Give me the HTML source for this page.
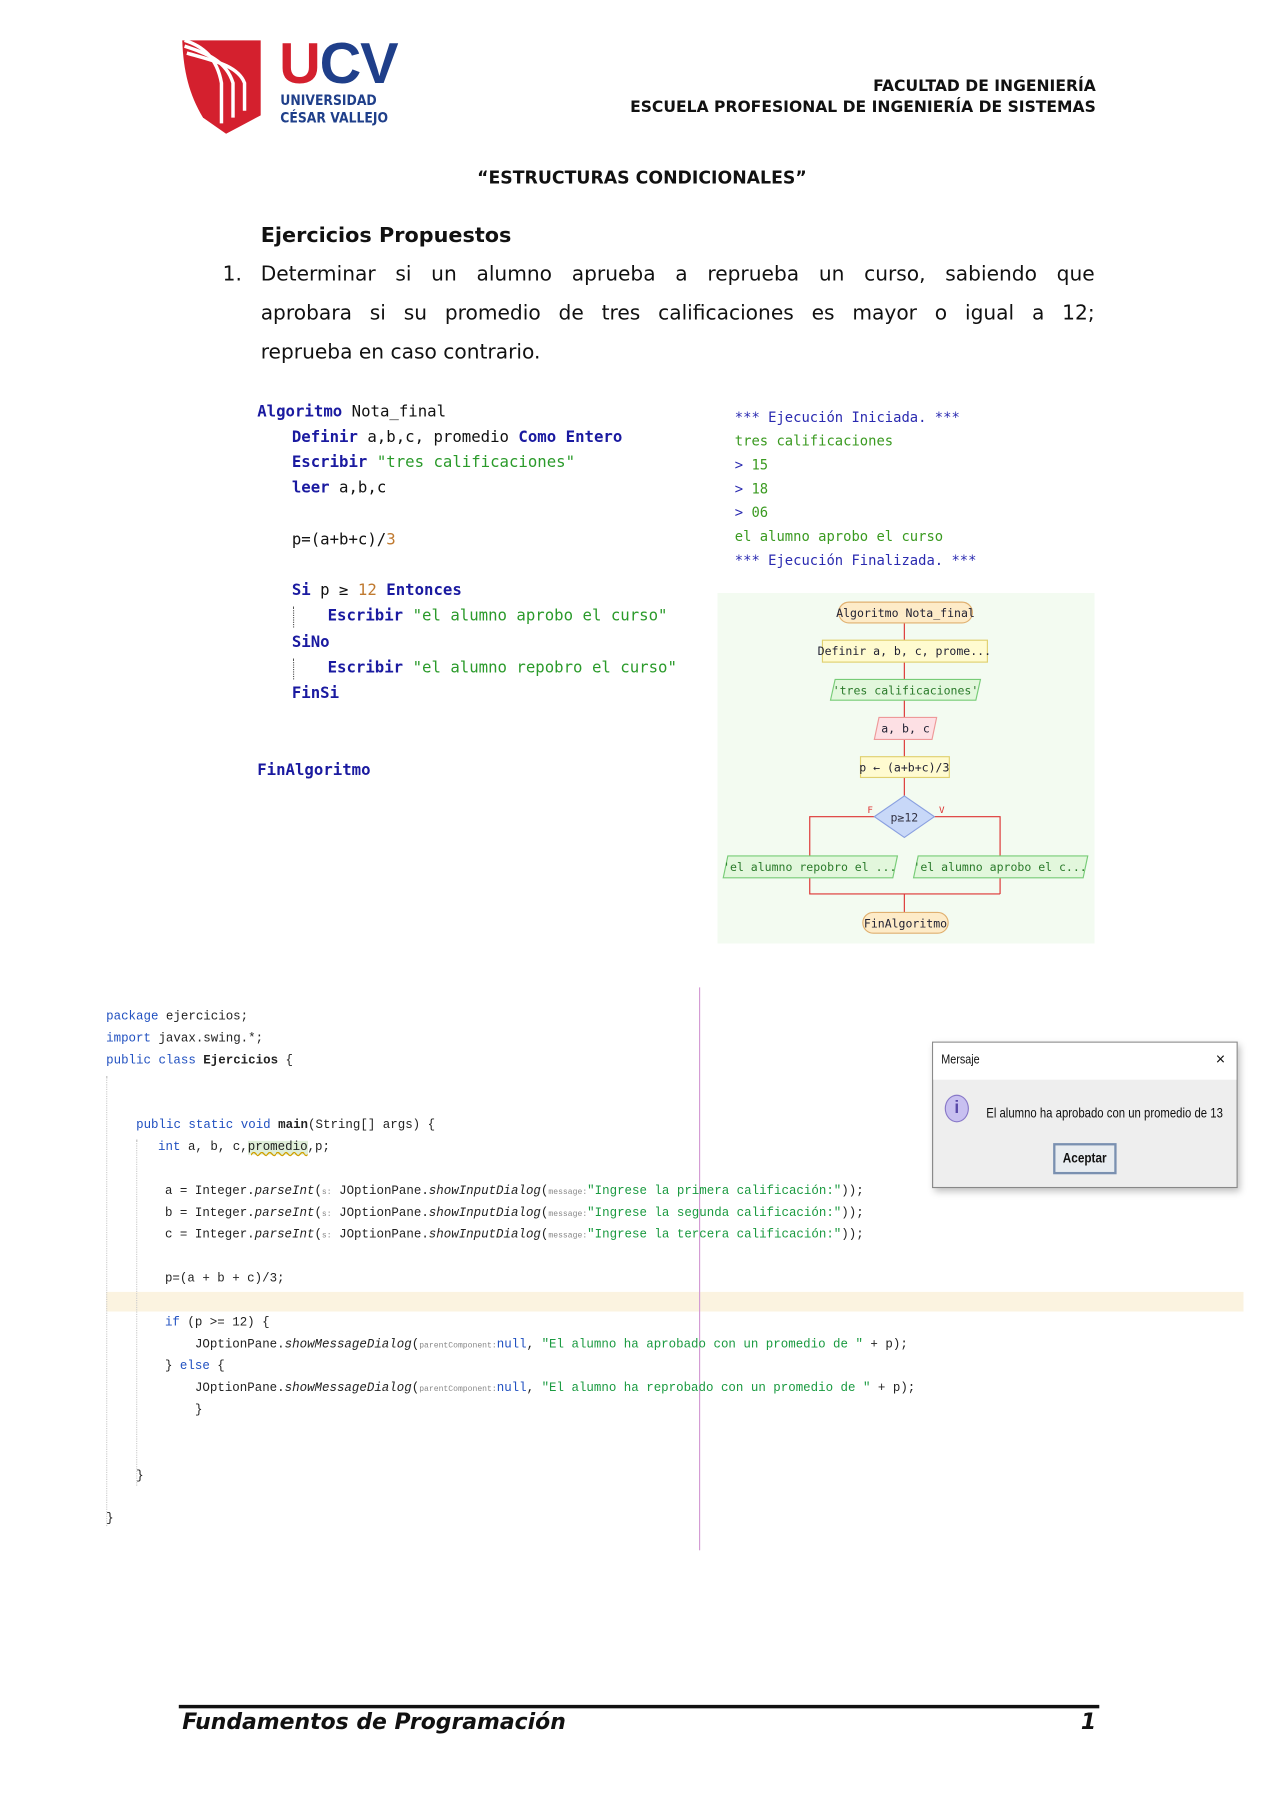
<!DOCTYPE html>
<html><head><meta charset="utf-8"><style>
html,body{margin:0;padding:0;background:#fff;}
body{width:1280px;height:1811px;overflow:hidden;position:relative;}
#pg{position:absolute;left:0;top:0;width:1110px;height:1570px;transform:scale(1.1535);transform-origin:0 0;font-family:"DejaVu Sans","Liberation Sans",sans-serif;color:#111;}
.a{position:absolute;white-space:pre;}
.hd{font-weight:bold;font-size:13.5px;right:160px;text-align:right;}
.body{font-size:17.5px;left:226px;width:723px;text-align:justify;text-align-last:justify;}
.ps{font-family:"DejaVu Sans Mono","Liberation Mono",monospace;font-size:13.6px;}
.k{color:#1a1aa0;font-weight:bold;}
.s{color:#2a9a2a;}
.n{color:#c07a30;}
.co{font-family:"DejaVu Sans Mono","Liberation Mono",monospace;font-size:12px;left:637px;}
.cb{color:#2a2ab0;}
.cg{color:#3a9a20;}
.jc{font-family:"Liberation Mono",monospace;font-size:10.8px;color:#222;}
.jk{color:#2050c0;}
.js{color:#1a9a40;}
.jl{font-size:7px;color:#888;}
.ji{font-style:italic;}
</style></head><body><div id="pg">
<svg class="a" style="left:156px;top:32px" width="72" height="85" viewBox="0 0 72 85">
<path d="M2 3 L70 3 L70 68 L40 84 L20 70 C8 50 3 30 2 3Z" fill="#d4202e"/>
<path d="M4 3 C20 8 32 18 36 40 L36 75" stroke="#fff" stroke-width="3" fill="none"/>
<path d="M4 8 C22 14 40 20 46 40 L46 70" stroke="#fff" stroke-width="3" fill="none"/>
<path d="M6 14 C26 20 50 24 56 40 L56 64" stroke="#fff" stroke-width="3" fill="none"/>
</svg>
<div class="a" style="left:242px;top:27px;font-family:'Liberation Sans',sans-serif;font-weight:bold;font-size:50px;letter-spacing:-1px;line-height:56px"><span style="color:#d4202e">U</span><span style="color:#1f3f8a">CV</span></div>
<div class="a" style="left:243px;top:79px;font-family:'DejaVu Sans',sans-serif;font-weight:bold;font-size:12.5px;color:#1f3f8a;line-height:15px;transform:scaleX(0.86);transform-origin:0 0">UNIVERSIDAD<br>CÉSAR VALLEJO</div>

<div class="a hd" style="top:67px">FACULTAD DE INGENIERÍA</div>
<div class="a hd" style="top:85px">ESCUELA PROFESIONAL DE INGENIERÍA DE SISTEMAS</div>
<div class="a" style="left:0;width:1113px;text-align:center;top:145px;font-weight:bold;font-size:15px">“ESTRUCTURAS CONDICIONALES”</div>
<div class="a" style="left:226px;top:194px;font-weight:bold;font-size:18px">Ejercicios Propuestos</div>
<div class="a" style="left:193px;top:228px;font-size:17.5px">1.</div>
<div class="a body" style="top:228px">Determinar si un alumno aprueba a reprueba un curso, sabiendo que</div>
<div class="a body" style="top:262px">aprobara si su promedio de tres calificaciones es mayor o igual a 12;</div>
<div class="a" style="left:226px;top:296px;font-size:17.5px">reprueba en caso contrario.</div>

<div class="a ps" style="left:223px;top:349px"><span class="k">Algoritmo</span> Nota_final</div>
<div class="a ps" style="left:253px;top:371px"><span class="k">Definir</span> a,b,c, promedio <span class="k">Como Entero</span></div>
<div class="a ps" style="left:253px;top:393px"><span class="k">Escribir</span> <span class="s">"tres calificaciones"</span></div>
<div class="a ps" style="left:253px;top:415px"><span class="k">leer</span> a,b,c</div>
<div class="a ps" style="left:253px;top:460px">p=(a+b+c)/<span class="n">3</span></div>
<div class="a ps" style="left:253px;top:504px"><span class="k">Si</span> p ≥ <span class="n">12</span> <span class="k">Entonces</span></div>
<div class="a ps" style="left:284px;top:526px"><span class="k">Escribir</span> <span class="s">"el alumno aprobo el curso"</span></div>
<div class="a ps" style="left:253px;top:549px"><span class="k">SiNo</span></div>
<div class="a ps" style="left:284px;top:571px"><span class="k">Escribir</span> <span class="s">"el alumno repobro el curso"</span></div>
<div class="a ps" style="left:253px;top:593px"><span class="k">FinSi</span></div>
<div class="a ps" style="left:223px;top:660px"><span class="k">FinAlgoritmo</span></div>
<div class="a" style="left:254px;top:526px;height:18px;border-left:1px dotted #555"></div>
<div class="a" style="left:254px;top:571px;height:18px;border-left:1px dotted #555"></div>

<div class="a co cb" style="top:355px">*** Ejecución Iniciada. ***</div>
<div class="a co cg" style="top:375px">tres calificaciones</div>
<div class="a co" style="top:396px"><span class="cb">&gt;</span> <span class="cg">15</span></div>
<div class="a co" style="top:417px"><span class="cb">&gt;</span> <span class="cg">18</span></div>
<div class="a co" style="top:437px"><span class="cb">&gt;</span> <span class="cg">06</span></div>
<div class="a co cg" style="top:458px">el alumno aprobo el curso</div>
<div class="a co cb" style="top:479px">*** Ejecución Finalizada. ***</div>

<svg class="a" style="left:622px;top:514px" width="327" height="304" viewBox="622 512 327 304" font-family="DejaVu Sans Mono,monospace" font-size="10">
<rect x="622" y="512" width="327" height="304" fill="#f3fbf1"/>
<g stroke="#d33" stroke-width="1" fill="none">
<path d="M784 538V553M784 572V587M784 605V620M784 639V654M784 672V688"/>
<path d="M758 706H702V740M810 706H867V740M702 759V773H867M867 759V773M784 773V789"/>
</g>
<rect x="727" y="520" width="116" height="18" rx="9" fill="#fdebc8" stroke="#e0b070"/>
<text x="785" y="533" text-anchor="middle" fill="#223">Algoritmo Nota_final</text>
<rect x="713" y="553" width="143" height="19" fill="#fffbd0" stroke="#e0d070"/>
<text x="784" y="566" text-anchor="middle" fill="#223">Definir a, b, c, prome...</text>
<path d="M724 587H850L846 605H720Z" fill="#e2f7dc" stroke="#7c7"/>
<text x="785" y="600" text-anchor="middle" fill="#2a7a2a">'tres calificaciones'</text>
<path d="M762 620H812L808 639H758Z" fill="#fde0e4" stroke="#e99"/>
<text x="785" y="633" text-anchor="middle" fill="#223">a, b, c</text>
<rect x="746" y="654" width="77" height="18" fill="#fffbd0" stroke="#e0d070"/>
<text x="784" y="667" text-anchor="middle" fill="#223">p ← (a+b+c)/3</text>
<path d="M784 688L810 706L784 724L758 706Z" fill="#c8d8f8" stroke="#8aa0e0"/>
<text x="784" y="710" text-anchor="middle" fill="#334">p≥12</text>
<text x="752" y="703" fill="#d33" font-size="8">F</text>
<text x="814" y="703" fill="#d33" font-size="8">V</text>
<path d="M631 740H778L774 759H627Z" fill="#e2f7dc" stroke="#7c7"/>
<text x="702" y="753" text-anchor="middle" fill="#2a7a2a">'el alumno repobro el ...</text>
<path d="M796 740H943L939 759H792Z" fill="#e2f7dc" stroke="#7c7"/>
<text x="867" y="753" text-anchor="middle" fill="#2a7a2a">'el alumno aprobo el c...</text>
<rect x="748" y="789" width="74" height="18" rx="9" fill="#fdebc8" stroke="#e0b070"/>
<text x="785" y="802" text-anchor="middle" fill="#223">FinAlgoritmo</text>
</svg>

<div class="a" style="left:92px;top:1120px;width:986px;height:17px;background:#fbf3e0"></div>
<div class="a" style="left:606px;top:856px;width:1px;height:488px;background:#d49ad4"></div>
<div class="a" style="left:92px;top:933px;height:390px;border-left:1px dotted #ccc"></div>
<div class="a" style="left:118px;top:988px;height:300px;border-left:1px dotted #ccc"></div>
<div class="a jc" style="left:92px;top:876px"><span class="jk">package</span> ejercicios;</div>
<div class="a jc" style="left:92px;top:895px"><span class="jk">import</span> javax.swing.*;</div>
<div class="a jc" style="left:92px;top:914px"><span class="jk">public class</span> <b>Ejercicios</b> {</div>
<div class="a jc" style="left:118px;top:970px"><span class="jk">public static void</span> <b>main</b>(String[] args) {</div>
<div class="a jc" style="left:137px;top:989px"><span class="jk">int</span> a, b, c,<span style="background:#dfeed8;text-decoration:underline wavy #d0a000">promedio</span>,p;</div>
<div class="a jc" style="left:143px;top:1027px">a = Integer.<span class="ji">parseInt</span>(<span class="jl">s:</span> JOptionPane.<span class="ji">showInputDialog</span>(<span class="jl">message:</span><span class="js">"Ingrese la primera calificación:"</span>));</div>
<div class="a jc" style="left:143px;top:1046px">b = Integer.<span class="ji">parseInt</span>(<span class="jl">s:</span> JOptionPane.<span class="ji">showInputDialog</span>(<span class="jl">message:</span><span class="js">"Ingrese la segunda calificación:"</span>));</div>
<div class="a jc" style="left:143px;top:1065px">c = Integer.<span class="ji">parseInt</span>(<span class="jl">s:</span> JOptionPane.<span class="ji">showInputDialog</span>(<span class="jl">message:</span><span class="js">"Ingrese la tercera calificación:"</span>));</div>
<div class="a jc" style="left:143px;top:1103px">p=(a + b + c)/3;</div>
<div class="a jc" style="left:143px;top:1141px"><span class="jk">if</span> (p &gt;= 12) {</div>
<div class="a jc" style="left:169px;top:1160px">JOptionPane.<span class="ji">showMessageDialog</span>(<span class="jl">parentComponent:</span><span class="jk">null</span>, <span class="js">"El alumno ha aprobado con un promedio de "</span> + p);</div>
<div class="a jc" style="left:143px;top:1179px">} <span class="jk">else</span> {</div>
<div class="a jc" style="left:169px;top:1198px">JOptionPane.<span class="ji">showMessageDialog</span>(<span class="jl">parentComponent:</span><span class="jk">null</span>, <span class="js">"El alumno ha reprobado con un promedio de "</span> + p);</div>
<div class="a jc" style="left:169px;top:1217px">}</div>
<div class="a jc" style="left:118px;top:1274px">}</div>
<div class="a jc" style="left:92px;top:1311px">}</div>

<div class="a" style="left:808px;top:903px;width:263px;height:125px;border:1px solid #888;background:#eeeeee;box-shadow:2px 3px 6px rgba(0,0,0,.25);font-family:'Liberation Sans',sans-serif">
<div style="position:absolute;left:0;top:0;width:263px;height:32px;background:#fff"></div>
<div style="position:absolute;left:7px;top:9px;font-size:11px;transform:scaleX(.85);transform-origin:0 0">Mersaje</div>
<div style="position:absolute;left:245px;top:6px;font-size:14px">×</div>
<div style="position:absolute;left:10px;top:45px;width:19px;height:22px;border-radius:50%;background:#c8c0f0;border:1px solid #8878c8;color:#5848a8;font-size:15px;font-weight:bold;text-align:center;line-height:22px">i</div>
<div style="position:absolute;left:46px;top:54px;font-size:12px;white-space:nowrap;transform:scaleX(.82);transform-origin:0 0">El alumno ha aprobado con un promedio de 13</div>
<div style="position:absolute;left:104px;top:87px;width:51px;height:23px;border:2px solid #7a90b0;background:#e8ecf0;font-size:12px;font-weight:bold;text-align:center;line-height:23px"><span style="display:inline-block;transform:scaleX(.85)">Aceptar</span></div>
</div>

<div class="a" style="left:155px;top:1478px;width:798px;height:3px;background:#111"></div>
<div class="a" style="left:158px;top:1482px;font-weight:bold;font-style:italic;font-size:19px">Fundamentos de Programación</div>
<div class="a" style="left:937px;top:1482px;font-weight:bold;font-style:italic;font-size:19px">1</div>
</div></body></html>
